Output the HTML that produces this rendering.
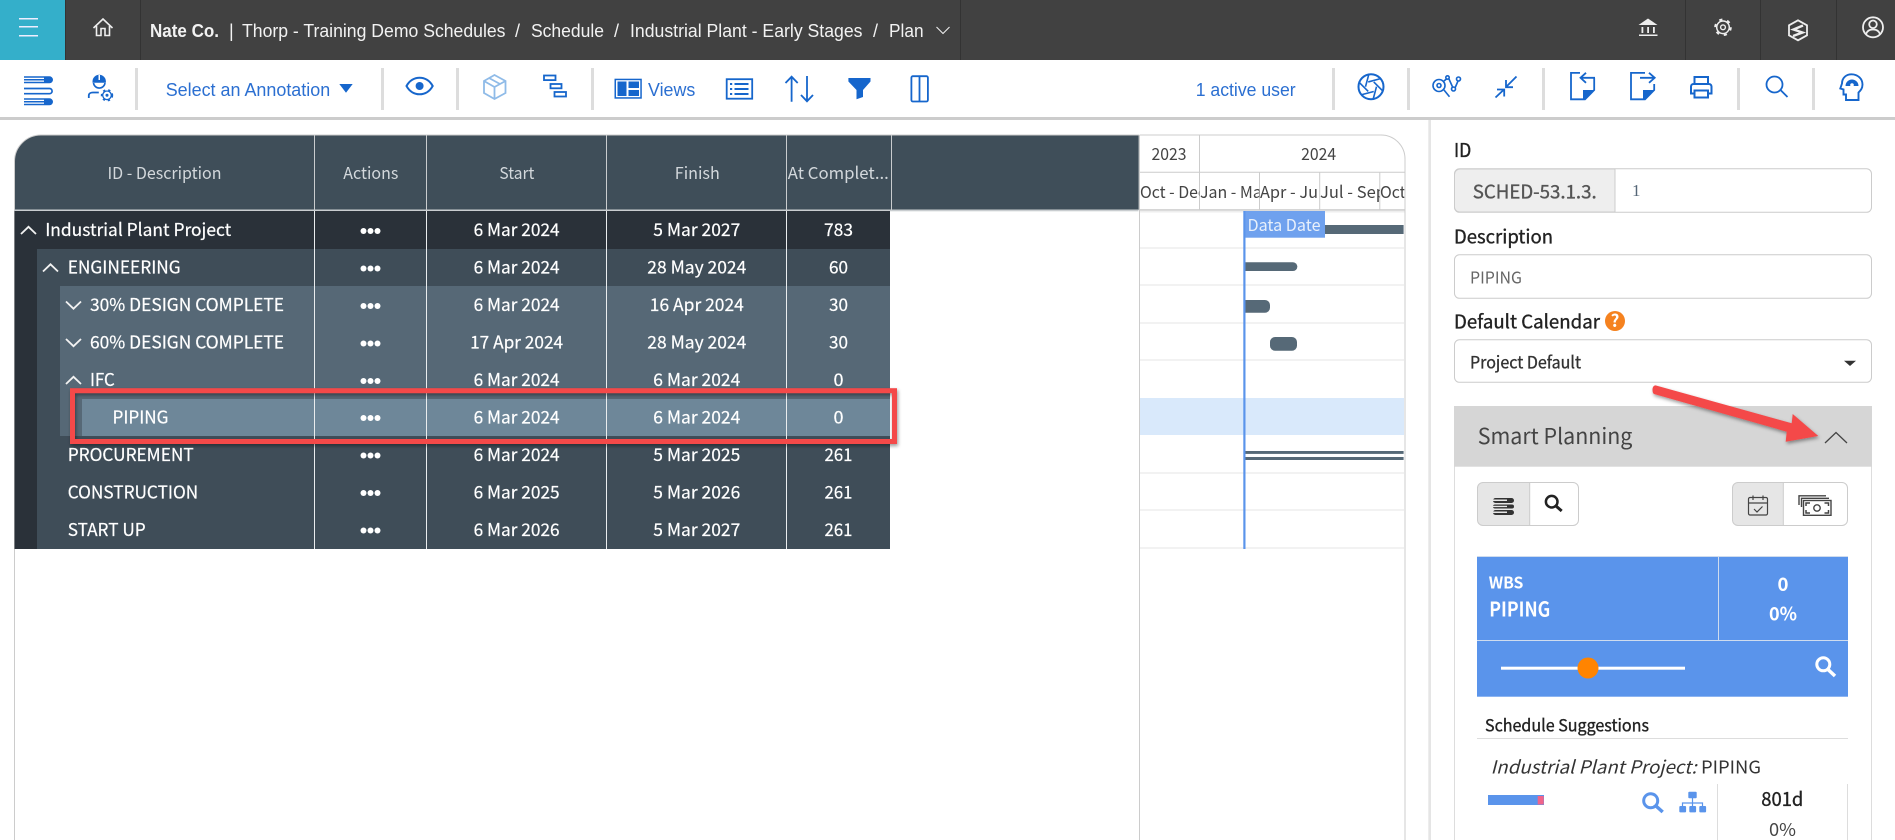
<!DOCTYPE html>
<html lang="en"><head><meta charset="utf-8"><title>Plan</title>
<style>
html,body{margin:0;padding:0;background:#fff;width:1895px;height:840px;overflow:hidden}
svg{display:block}
text{white-space:pre}
.n{font-family:"Noto Sans CJK JP","Liberation Sans",sans-serif}
.r{font-family:"Liberation Sans",sans-serif}
.tb text{font-size:17.5px;fill:#fff;stroke:#fff;stroke-width:.2px}
.tb .m{text-anchor:middle}
.b{fill:none;stroke:#1666cc;stroke-width:1.8}
.f{fill:#1666cc}
.w{fill:none;stroke:#eee;stroke-width:1.6}
.s{stroke:currentColor;stroke-width:.35px}
</style></head><body>
<svg width="1895" height="840" viewBox="0 0 1895 840" xmlns="http://www.w3.org/2000/svg">
<defs>
<filter id="sh" x="-10%" y="-30%" width="120%" height="170%"><feDropShadow dx="1" dy="2" stdDeviation="1.8" flood-color="#000" flood-opacity=".4"/></filter>
<clipPath id="c1"><rect x="1140" y="172" width="59.4" height="38"/></clipPath>
<clipPath id="c2"><rect x="1199.4" y="172" width="60" height="38"/></clipPath>
<clipPath id="c3"><rect x="1259.5" y="172" width="60" height="38"/></clipPath>
<clipPath id="c4"><rect x="1319.7" y="172" width="60" height="38"/></clipPath>
<clipPath id="c5"><rect x="1379.8" y="172" width="24.5" height="38"/></clipPath>
</defs>

<!-- top bar -->
<rect width="1895" height="60" fill="#414141"/>
<rect width="65" height="60" fill="#34afca"/>
<g fill="#eef"><rect x="19" y="18" width="19" height="1.5"/><rect x="19" y="26" width="19" height="1.5"/><rect x="19" y="35" width="19" height="1.5"/></g>
<g stroke="#333" stroke-width="1"><path d="M65.5 0V60M140.5 0V60M960.5 0V60M1685.5 0V60M1760.5 0V60M1836.5 0V60"/></g>
<path class="w" d="M93.5 28 103 19l9.5 9M96.5 26v9.5h4.5v-7h4v7h4.5V26"/>
<g class="r" font-size="18" fill="#f2f2f2">
<text x="150" y="37" font-weight="700" textLength="69" lengthAdjust="spacingAndGlyphs">Nate Co.</text>
<text x="229" y="37">|</text>
<text x="242" y="37" textLength="263.5" lengthAdjust="spacingAndGlyphs">Thorp - Training Demo Schedules</text>
<text x="515" y="37">/</text>
<text x="531" y="37" textLength="73" lengthAdjust="spacingAndGlyphs">Schedule</text>
<text x="614" y="37">/</text>
<text x="630" y="37" textLength="232.5" lengthAdjust="spacingAndGlyphs">Industrial Plant - Early Stages</text>
<text x="873" y="37">/</text>
<text x="889" y="37" textLength="34.6" lengthAdjust="spacingAndGlyphs">Plan</text>
</g>
<path class="w" style="stroke-width:1.1" d="M936.5 27 943 33.500 949.5 27"/>
<!-- bank -->
<path fill="#eee" d="M1648 18.5 1657.5 25H1638.5zM1639 34.5h18.5V36H1639zM1641.500 27h1.800v6h-1.800zM1647.200 27h1.800v6h-1.800zM1653 27h1.800v6H1653z"/>
<!-- gear -->
<g fill="none" stroke="#eee"><circle cx="1723" cy="27.3" r="6.3" stroke-width="1.5"/><circle cx="1723" cy="27.3" r="2.4" stroke-width="1.4"/><circle cx="1723" cy="27.3" r="7.8" stroke-width="2" stroke-dasharray="3.2 4.97"/></g>
<!-- hex -->
<path class="w" style="stroke-width:1.8" d="M1798 20.300 1807 25.300V35.300L1798 40.300 1789 35.300V25.300Z"/>
<path class="w" style="stroke-width:2.4" d="M1803 25.500 1793.500 29.500 1802.500 32.500 1793 36"/>
<!-- user -->
<circle class="w" style="stroke-width:1.8" cx="1873" cy="27.3" r="10"/><circle class="w" style="stroke-width:1.8" cx="1873" cy="24.3" r="3.8"/><path class="w" style="stroke-width:1.8" d="M1866 34.5c1-4 4-5 7-5s6 1 7 5"/>

<!-- toolbar -->
<rect y="117" width="1895" height="3" fill="#ccc"/>
<g fill="#ddd"><rect x="135" y="68" width="3" height="42"/><rect x="381" y="68" width="3" height="42"/><rect x="456" y="68" width="3" height="42"/><rect x="591" y="68" width="3" height="42"/><rect x="1332" y="68" width="3" height="42"/><rect x="1407" y="68" width="3" height="42"/><rect x="1542" y="68" width="3" height="42"/><rect x="1737" y="68" width="3" height="42"/><rect x="1812" y="68" width="3" height="42"/></g>
<!-- stack -->
<path class="f" d="M24 76.300h25.500a3.500 3.500 0 0 1 0 7H24v-1.500h20v-1.300H24v-1.500h20v-1.200H24z"/>
<path class="b" style="stroke-width:1.7" d="M24 88.500h25.500a2.600 2.600 0 0 1 0 5.200H24"/>
<path class="f" d="M24 98.300h25.500a3.500 3.500 0 0 1 0 7H24v-1.500h20v-1.300H24v-1.500h20v-1.200H24z"/>
<!-- worker -->
<path class="f" d="M92.500 81.500a6.700 6.700 0 0 1 13.400 0v1.300H92.500z"/><path class="b" style="stroke-width:1.6" d="M93.500 83a5.800 5.800 0 0 0 11.500 0"/><path fill="#fff" d="M98.500 75h1.500v5h-1.500z"/>
<path class="b" d="M88.800 98v-2.500c0-2 2-3 4-3h6"/>
<circle class="b" style="stroke-width:1.3" cx="107" cy="95.3" r="4.3"/><circle class="f" cx="107" cy="95.3" r="1.5"/><circle cx="107" cy="95.3" r="5.4" fill="none" stroke="#1666cc" stroke-width="1.6" stroke-dasharray="2.3 3"/>
<text class="r" x="165.7" y="96" font-size="18" fill="#2b6fd1" textLength="164.5" lengthAdjust="spacingAndGlyphs">Select an Annotation</text>
<path class="f" d="M339.300 84H352.700L346 92.800z"/>
<!-- eye -->
<path class="b" style="stroke-width:2" d="M406.500 86c3-5.500 8-8.300 13.100-8.300s10.100 2.800 13.100 8.300c-3 5.500-8 8.300-13.100 8.300s-10.100-2.800-13.100-8.300z"/><circle class="f" cx="419.6" cy="86" r="4"/>
<!-- box -->
<g fill="none" stroke="#8fbbe8" stroke-width="1.8"><path d="M494.500 75 505.500 81V93L494.500 99 484 93V81Z"/><path d="M484 81 494.500 87 505.500 81M494.500 87V99M489 78 500 84"/></g>
<!-- gantt -->
<g class="b"><rect x="544" y="75.5" width="11.500" height="4.600"/><rect x="550.5" y="84" width="11" height="4.300"/><rect x="554.5" y="92" width="11.500" height="4.500"/></g>
<!-- views -->
<rect class="f" x="614.5" y="78.7" width="27.300" height="20"/><rect fill="#fff" x="616" y="80.2" width="24.300" height="17"/><rect class="f" x="617.5" y="81.5" width="9" height="14.500"/><rect class="f" x="628.5" y="81.5" width="10.500" height="6.500"/><rect class="f" x="628.5" y="90" width="10.500" height="6"/>
<text class="r" x="648" y="96" font-size="18" fill="#2b6fd1" textLength="47.3" lengthAdjust="spacingAndGlyphs">Views</text>
<!-- list -->
<rect class="b" x="726.7" y="79.2" width="25.500" height="19.500"/><g class="f"><rect x="730" y="83" width="2.200" height="2"/><rect x="730" y="88" width="2.200" height="2"/><rect x="730" y="93" width="2.200" height="2"/><rect x="734.5" y="83" width="14" height="2"/><rect x="734.5" y="88" width="14" height="2"/><rect x="734.5" y="93" width="14" height="2"/></g>
<!-- sort -->
<path class="b" d="M791.600 77V101.700M785.500 83 791.600 76.700 797.700 83M807 76V101M801 95 807 101.300 813 95"/>
<!-- funnel -->
<path class="f" d="M848.400 78H870.500V81.500L863 90V97L856.500 99.300V90L848.400 81.500Z"/>
<!-- columns -->
<rect class="b" x="911.4" y="76.2" width="16.500" height="25.300" rx="1.5"/><path class="b" d="M919.500 76.500V101.500"/>
<text class="r" x="1195.7" y="96" font-size="18" fill="#2b6fd1" textLength="100" lengthAdjust="spacingAndGlyphs">1 active user</text>
<!-- aperture -->
<g transform="translate(1371 86.7)"><circle class="b" style="stroke-width:2" r="12.5"/><g class="b" style="stroke-width:1.6"><path d="M5.500 0 2.200 12.300"/><path d="M5.500 0 2.200 12.300" transform="rotate(60)"/><path d="M5.500 0 2.200 12.300" transform="rotate(120)"/><path d="M5.500 0 2.200 12.300" transform="rotate(180)"/><path d="M5.500 0 2.200 12.300" transform="rotate(240)"/><path d="M5.500 0 2.200 12.300" transform="rotate(300)"/></g></g>
<!-- network -->
<g class="b" style="stroke-width:1.6"><circle cx="1439" cy="85.5" r="6"/><circle cx="1439" cy="85.5" r="2"/><path d="M1444 90 1449.500 96.700M1444 81 1447 78.500M1449 79 1453 88M1455 88 1458 81"/><circle cx="1447.5" cy="77.5" r="1.7"/><circle cx="1453.5" cy="89" r="2"/><circle cx="1458.5" cy="79" r="2"/></g>
<!-- compress -->
<path class="b" d="M1516.500 76.500 1506 87M1506 80V87.200H1513M1495.500 97.500 1504 89.500M1497 89.500H1504.200V96.500"/>
<!-- docs -->
<path class="b" d="M1580 72.900H1571V99.300H1585L1594.200 90V78"/><path class="f" d="M1583 99.500V90H1595L1585 100Z"/><path class="b" d="M1595 77.800H1581M1586 72.800 1580.500 77.800 1586 82.800"/>
<path class="b" d="M1645 72.900H1631V99.300H1645L1654.200 90V84"/><path class="f" d="M1643 99.500V90H1655L1645 100Z"/><path class="b" d="M1640 77.800H1654.500M1649 72.800 1654.700 77.800 1649 82.800"/>
<!-- printer -->
<path class="b" style="stroke-width:2" d="M1694.500 84V77H1708V84M1694.500 93.500H1691V86.500a2.500 2.500 0 0 1 2.500-2.500H1709a2.500 2.500 0 0 1 2.500 2.500V93.500H1708"/><rect class="b" style="stroke-width:2" x="1694.5" y="90.5" width="13.500" height="7"/>
<!-- search -->
<circle class="b" cx="1774.5" cy="84.5" r="8"/><path class="b" d="M1780.500 90 1787.500 97"/>
<!-- head -->
<path class="b" style="stroke-width:1.9" d="M1846 100V94.500H1843.500V89.500L1840.300 88.500 1842 83.500C1842 77.500 1846.500 74.300 1851.500 74.300C1858 74.300 1862.500 79 1862.500 84.500C1862.500 88.500 1860.500 90.500 1858.500 92.500V100Z"/><path class="f" d="M1845.500 86a6.500 6.500 0 0 1 13 0z"/><circle cx="1852" cy="85" r="1.800" fill="#fff"/>

<!-- gantt grid -->
<g fill="none" stroke="#e6e6e6" stroke-width="1"><path d="M1140 248H1404M1140 285H1404M1140 323H1404M1140 360H1404M1140 473H1404M1140 510H1404M1140 548H1404"/></g>
<rect x="1140" y="398" width="264" height="37" fill="#d9e9fb"/>
<path d="M1140 210H1405" stroke="#c8c8c8" stroke-width="1.5"/>
<path d="M1140 211.500H1405" stroke="#eee" stroke-width="2"/>
<path d="M1140 172.300H1405M1199.500 135V210M1259.500 172V210M1319.700 172V210M1379.800 172V210" stroke="#ccc" stroke-width="1" fill="none"/>
<path d="M1139.500 135H1381A24 24 0 0 1 1405 159V840M1139.500 135V840" fill="none" stroke="#ccc" stroke-width="1"/>
<g class="n" font-size="16.5" fill="#444">
<text x="1169" y="160" text-anchor="middle" textLength="35" lengthAdjust="spacingAndGlyphs">2023</text>
<text x="1318.6" y="160" text-anchor="middle" textLength="35" lengthAdjust="spacingAndGlyphs">2024</text>
<g clip-path="url(#c1)"><text x="1140" y="198" textLength="66" lengthAdjust="spacingAndGlyphs">Oct - Dec</text></g>
<g clip-path="url(#c2)"><text x="1200" y="198" textLength="68" lengthAdjust="spacingAndGlyphs">Jan - Mar</text></g>
<g clip-path="url(#c3)"><text x="1260" y="198" textLength="68" lengthAdjust="spacingAndGlyphs">Apr - Jun</text></g>
<g clip-path="url(#c4)"><text x="1320" y="198" textLength="66" lengthAdjust="spacingAndGlyphs">Jul - Sep</text></g>
<g clip-path="url(#c5)"><text x="1380" y="198" textLength="66" lengthAdjust="spacingAndGlyphs">Oct - Dec</text></g>
</g>
<g fill="#566977">
<rect x="1245" y="225" width="158.600" height="9"/>
<path d="M1245 262.300H1293a4.300 4.300 0 0 1 0 8.700H1245z"/>
<path d="M1245 300H1265a5 5 0 0 1 5 5V307.700a5 5 0 0 1-5 5H1245z"/>
<rect x="1270" y="337" width="27" height="13.700" rx="5"/>
<rect x="1245" y="451" width="158.600" height="2.900"/><rect x="1245" y="457" width="158.600" height="3"/>
</g>
<rect x="1243.3" y="211" width="2.200" height="338" fill="#5a94eb"/>
<rect x="1245.4" y="211" width="79.600" height="26.700" fill="#6fa1ee"/>
<text class="n" x="1247.5" y="231" font-size="16.5" fill="#e8f0fb" textLength="73" lengthAdjust="spacingAndGlyphs">Data Date</text>

<!-- table -->
<path d="M41 135H1138.700V210H14.500V161.500A26.500 26.500 0 0 1 41 135Z" fill="#3f4e59"/>
<path d="M14.500 161.500A26.500 26.500 0 0 1 41 135H1139" fill="none" stroke="#ccc" stroke-width="1"/>
<path d="M14.500 160V840" stroke="#ccc" stroke-width="1"/>
<rect x="14.5" y="209.5" width="1124" height="1.800" fill="#c9cdd0"/>
<rect x="14.5" y="211" width="875.500" height="338" fill="#2a3139"/>
<rect x="37" y="249" width="853" height="300" fill="#3f4d58"/>
<rect x="60" y="286" width="830" height="150" fill="#566876"/>
<rect x="82" y="399" width="808" height="37" fill="#6e8799"/>
<g stroke="#c9ccce" stroke-width="1"><path d="M314.500 135V210M426.500 135V210M606.500 135V210M786.500 135V210M891.500 135V210"/></g>
<g stroke="#e9ecee" stroke-width="1"><path d="M314.500 211V549M426.500 211V549M606.500 211V549M786.500 211V549"/></g>
<g class="n" font-size="16.5" fill="#d3d8dc">
<text x="107.5" y="179" textLength="114" lengthAdjust="spacingAndGlyphs">ID - Description</text>
<text x="343.3" y="179" textLength="55" lengthAdjust="spacingAndGlyphs">Actions</text>
<text x="499.4" y="179" textLength="35" lengthAdjust="spacingAndGlyphs">Start</text>
<text x="674.8" y="179" textLength="45" lengthAdjust="spacingAndGlyphs">Finish</text>
<text x="787.8" y="179" textLength="101" lengthAdjust="spacingAndGlyphs">At Complet...</text>
</g>
<g class="tb n">
<text x="45.2" y="236" textLength="186" lengthAdjust="spacingAndGlyphs">Industrial Plant Project</text>
<text x="67.7" y="273.5" textLength="113" lengthAdjust="spacingAndGlyphs">ENGINEERING</text>
<text x="90" y="311" textLength="194" lengthAdjust="spacingAndGlyphs">30% DESIGN COMPLETE</text>
<text x="90" y="348.5" textLength="194" lengthAdjust="spacingAndGlyphs">60% DESIGN COMPLETE</text>
<text x="90" y="386" textLength="24.8" lengthAdjust="spacingAndGlyphs">IFC</text>
<text x="112.5" y="423.5" textLength="56" lengthAdjust="spacingAndGlyphs">PIPING</text>
<text x="67.7" y="461" textLength="126" lengthAdjust="spacingAndGlyphs">PROCUREMENT</text>
<text x="67.7" y="498.5" textLength="130.5" lengthAdjust="spacingAndGlyphs">CONSTRUCTION</text>
<text x="67.7" y="536" textLength="78" lengthAdjust="spacingAndGlyphs">START UP</text>

<text class="m" x="516.6" y="236" textLength="86" lengthAdjust="spacingAndGlyphs">6 Mar 2024</text>
<text class="m" x="516.6" y="273.5" textLength="86" lengthAdjust="spacingAndGlyphs">6 Mar 2024</text>
<text class="m" x="516.6" y="311" textLength="86" lengthAdjust="spacingAndGlyphs">6 Mar 2024</text>
<text class="m" x="516.6" y="348.5" textLength="93" lengthAdjust="spacingAndGlyphs">17 Apr 2024</text>
<text class="m" x="516.6" y="386" textLength="86" lengthAdjust="spacingAndGlyphs">6 Mar 2024</text>
<text class="m" x="516.6" y="423.5" textLength="86" lengthAdjust="spacingAndGlyphs">6 Mar 2024</text>
<text class="m" x="516.6" y="461" textLength="86" lengthAdjust="spacingAndGlyphs">6 Mar 2024</text>
<text class="m" x="516.6" y="498.5" textLength="86" lengthAdjust="spacingAndGlyphs">6 Mar 2025</text>
<text class="m" x="516.6" y="536" textLength="86" lengthAdjust="spacingAndGlyphs">6 Mar 2026</text>

<text class="m" x="696.8" y="236" textLength="87" lengthAdjust="spacingAndGlyphs">5 Mar 2027</text>
<text class="m" x="696.8" y="273.5" textLength="99" lengthAdjust="spacingAndGlyphs">28 May 2024</text>
<text class="m" x="696.8" y="311" textLength="94" lengthAdjust="spacingAndGlyphs">16 Apr 2024</text>
<text class="m" x="696.8" y="348.5" textLength="99" lengthAdjust="spacingAndGlyphs">28 May 2024</text>
<text class="m" x="696.8" y="386" textLength="87" lengthAdjust="spacingAndGlyphs">6 Mar 2024</text>
<text class="m" x="696.8" y="423.5" textLength="87" lengthAdjust="spacingAndGlyphs">6 Mar 2024</text>
<text class="m" x="696.8" y="461" textLength="87" lengthAdjust="spacingAndGlyphs">5 Mar 2025</text>
<text class="m" x="696.8" y="498.5" textLength="87" lengthAdjust="spacingAndGlyphs">5 Mar 2026</text>
<text class="m" x="696.8" y="536" textLength="87" lengthAdjust="spacingAndGlyphs">5 Mar 2027</text>

<text class="m" x="838.5" y="236" textLength="29" lengthAdjust="spacingAndGlyphs">783</text>
<text class="m" x="838.5" y="273.5" textLength="19" lengthAdjust="spacingAndGlyphs">60</text>
<text class="m" x="838.5" y="311" textLength="19" lengthAdjust="spacingAndGlyphs">30</text>
<text class="m" x="838.5" y="348.5" textLength="19" lengthAdjust="spacingAndGlyphs">30</text>
<text class="m" x="838.5" y="386" textLength="10" lengthAdjust="spacingAndGlyphs">0</text>
<text class="m" x="838.5" y="423.5" textLength="10" lengthAdjust="spacingAndGlyphs">0</text>
<text class="m" x="838.5" y="461" textLength="28" lengthAdjust="spacingAndGlyphs">261</text>
<text class="m" x="838.5" y="498.5" textLength="28" lengthAdjust="spacingAndGlyphs">261</text>
<text class="m" x="838.5" y="536" textLength="28" lengthAdjust="spacingAndGlyphs">261</text>
</g>
<g fill="#fff">
<circle cx="363.5" cy="231" r="3"/><circle cx="370.5" cy="231" r="3"/><circle cx="377.5" cy="231" r="3"/>
<circle cx="363.5" cy="268.5" r="3"/><circle cx="370.5" cy="268.5" r="3"/><circle cx="377.5" cy="268.5" r="3"/>
<circle cx="363.5" cy="306" r="3"/><circle cx="370.5" cy="306" r="3"/><circle cx="377.5" cy="306" r="3"/>
<circle cx="363.5" cy="343.5" r="3"/><circle cx="370.5" cy="343.5" r="3"/><circle cx="377.5" cy="343.5" r="3"/>
<circle cx="363.5" cy="381" r="3"/><circle cx="370.5" cy="381" r="3"/><circle cx="377.5" cy="381" r="3"/>
<circle cx="363.5" cy="418" r="3"/><circle cx="370.5" cy="418" r="3"/><circle cx="377.5" cy="418" r="3"/>
<circle cx="363.5" cy="455.5" r="3"/><circle cx="370.5" cy="455.5" r="3"/><circle cx="377.5" cy="455.5" r="3"/>
<circle cx="363.5" cy="493" r="3"/><circle cx="370.5" cy="493" r="3"/><circle cx="377.5" cy="493" r="3"/>
<circle cx="363.5" cy="530.5" r="3"/><circle cx="370.5" cy="530.5" r="3"/><circle cx="377.5" cy="530.5" r="3"/>
</g>
<g fill="none" stroke="#f2f2f2" stroke-width="1.8">
<path d="M21 234 28.500 226.800 36 234"/>
<path d="M43 271.500 50.500 264.300 58 271.500"/>
<path d="M66 301.500 73.500 308.700 81 301.500"/>
<path d="M66 339 73.500 346.200 81 339"/>
<path d="M66 384 73.500 376.800 81 384"/>
</g>
<rect x="72.5" y="390.7" width="822" height="50.800" fill="none" stroke="#f44848" stroke-width="5" filter="url(#sh)"/>

<!-- right panel -->
<rect x="1428.3" y="120" width="2.700" height="720" fill="#e5e5e5"/>
<g class="n" font-size="19" fill="#222" style="color:#222">
<text class="s" x="1454" y="157" textLength="17.3" lengthAdjust="spacingAndGlyphs">ID</text>
<text class="s" x="1454" y="243.3" textLength="99" lengthAdjust="spacingAndGlyphs">Description</text>
<text class="s" x="1454" y="328.3" textLength="146" lengthAdjust="spacingAndGlyphs">Default Calendar</text>
</g>
<rect x="1454.5" y="168.8" width="417" height="43.500" rx="5" fill="#fff" stroke="#ccc"/>
<path d="M1615 169H1460a5.500 5.500 0 0 0-5.500 5.500V207a5 5 0 0 0 5 5H1615z" fill="#eee" stroke="#ccc"/>
<text class="n s" x="1472.7" y="198.7" font-size="19" fill="#555" style="color:#555" textLength="124" lengthAdjust="spacingAndGlyphs">SCHED-53.1.3.</text>
<text x="1632" y="196" font-family="Liberation Serif,serif" font-size="17" fill="#567">1</text>
<rect x="1454.5" y="254.8" width="417" height="43.500" rx="5" fill="#fff" stroke="#ccc"/>
<text class="n" x="1470" y="283.3" font-size="16.5" fill="#666" textLength="52" lengthAdjust="spacingAndGlyphs">PIPING</text>
<circle cx="1615" cy="321" r="10" fill="#f5821f"/>
<text class="n" x="1615" y="327" font-size="17" font-weight="700" fill="#fff" text-anchor="middle">?</text>
<rect x="1454.5" y="339.8" width="417" height="42.500" rx="5" fill="#fff" stroke="#ccc"/>
<text class="n s" x="1470" y="368.3" font-size="17" fill="#333" style="color:#333" textLength="111" lengthAdjust="spacingAndGlyphs">Project Default</text>
<path d="M1844 360.700H1856L1850 366z" fill="#333"/>
<path d="M1454.500 466V840M1871.500 466V840" stroke="#ddd" stroke-width="1"/>
<rect x="1454" y="406" width="418" height="60.700" fill="#d6d6d6"/>
<text class="n" x="1477.7" y="444" font-size="22" fill="#444" textLength="154.7" lengthAdjust="spacingAndGlyphs">Smart Planning</text>
<path d="M1825 443 1836 432.500 1847 443" fill="none" stroke="#444" stroke-width="1.3"/>
<path d="M1656 385.500C1654 385 1652.500 387 1652.500 389.800 1652.500 392 1653 393.500 1654 394L1786.700 431.700 1785.700 441.700 1818.300 436 1792.700 414 1791.700 423.300Z" fill="#f44848" filter="url(#sh)"/>

<!-- button groups -->
<path d="M1530 482.500H1483a5.500 5.500 0 0 0-5.500 5.500V520a5.500 5.500 0 0 0 5.500 5.500H1530z" fill="#e6e6e6"/>
<rect x="1477.5" y="482.5" width="101" height="43" rx="5.5" fill="none" stroke="#ccc"/><path d="M1529.700 482.500V525.500" stroke="#ccc"/>
<g fill="#333"><rect x="1493" y="498" width="21" height="5" rx="2.5"/><rect x="1493" y="504.5" width="21" height="4" rx="2"/><rect x="1493" y="510" width="21" height="5" rx="2.5"/><rect x="1493" y="499.5" width="14" height="1.500" fill="#e6e6e6"/><rect x="1493" y="505.800" width="14" height="1.300" fill="#e6e6e6"/><rect x="1493" y="511.5" width="14" height="1.500" fill="#e6e6e6"/></g>
<circle cx="1551.7" cy="501.7" r="5.8" fill="none" stroke="#222" stroke-width="2.5"/><path d="M1556 506 1561.700 511" stroke="#222" stroke-width="3"/>
<path d="M1783.300 482.500H1738a5.500 5.500 0 0 0-5.500 5.500V520a5.500 5.500 0 0 0 5.500 5.500H1783.300z" fill="#e6e6e6"/>
<rect x="1732.5" y="482.5" width="115" height="43" rx="5.5" fill="none" stroke="#ccc"/><path d="M1783.300 482.500V525.500" stroke="#ccc"/>
<g fill="none" stroke="#444" stroke-width="1.2"><rect x="1748.5" y="497.5" width="19" height="17.500" rx="1.5"/><path d="M1748.500 503H1767.500M1753 495.500V500M1763 495.500V500M1754 509 1757 512 1762.500 506.500"/></g>
<g fill="none" stroke="#444" stroke-width="1.4"><path d="M1799 505V495.800H1826M1801.500 507V498.300H1829"/><rect x="1803.5" y="500.5" width="27.500" height="14.800" fill="#fff"/><circle cx="1817" cy="508" r="3.2"/><path d="M1806 506V503H1810M1828.500 510V513H1824.500M1806 510V513H1810M1828.500 506V503H1824.500" stroke-width="1.5"/></g>

<!-- blue card -->
<rect x="1477" y="556.3" width="371" height="140.400" fill="#5a94eb"/>
<path d="M1477 556.500H1848M1477 640.500H1848M1718.500 556.500V640" stroke="#cfdcee" stroke-width="1"/>
<g class="n" fill="#fff">
<text x="1488.7" y="588.3" font-size="16" font-weight="700" textLength="34.7" lengthAdjust="spacingAndGlyphs">WBS</text>
<text x="1489.3" y="616.7" font-size="20" font-weight="700" textLength="61" lengthAdjust="spacingAndGlyphs">PIPING</text>
<text x="1783" y="591" font-size="19" font-weight="700" text-anchor="middle" textLength="11" lengthAdjust="spacingAndGlyphs">0</text>
<text x="1783" y="620.3" font-size="19" font-weight="700" text-anchor="middle" textLength="28" lengthAdjust="spacingAndGlyphs">0%</text>
</g>
<rect x="1501" y="666.7" width="184" height="3" fill="#fff"/>
<circle cx="1588" cy="668" r="10.5" fill="#ff8400"/>
<circle cx="1823.3" cy="664.3" r="6.5" fill="none" stroke="#fff" stroke-width="3"/><path d="M1828 669.500 1835 676" stroke="#fff" stroke-width="3.5"/>

<text class="n s" x="1485" y="731.7" font-size="17" fill="#222" style="color:#222" textLength="164" lengthAdjust="spacingAndGlyphs">Schedule Suggestions</text>
<path d="M1477 738.500H1848" stroke="#ddd"/>
<text class="n" x="1490.7" y="773.3" font-size="18" font-style="italic" fill="#333" textLength="206" lengthAdjust="spacingAndGlyphs">Industrial Plant Project:</text>
<text class="n" x="1701" y="773.3" font-size="18" fill="#333" textLength="60" lengthAdjust="spacingAndGlyphs">PIPING</text>
<rect x="1488" y="795" width="56" height="10" fill="#5a94eb"/><rect x="1537.7" y="796" width="6" height="8.500" fill="#f0648a"/>
<circle cx="1650.7" cy="800.7" r="7" fill="none" stroke="#5a94eb" stroke-width="3"/><path d="M1656 806 1662.700 812" stroke="#5a94eb" stroke-width="3.5"/>
<g fill="#5a94eb"><rect x="1688.3" y="791.7" width="8.400" height="6.600" rx="1"/><rect x="1679.3" y="806" width="6.800" height="6.400" rx="1"/><rect x="1689.3" y="806" width="6.800" height="6.400" rx="1"/><rect x="1699.3" y="806" width="6.800" height="6.400" rx="1"/></g>
<path d="M1692.500 798V806M1682.500 806V803H1702.500V806" fill="none" stroke="#5a94eb" stroke-width="1.2"/>
<path d="M1717.500 784V840M1847.500 784V840" stroke="#ddd"/>
<text class="n s" x="1761.3" y="806" font-size="19.5" fill="#222" style="color:#222" textLength="42" lengthAdjust="spacingAndGlyphs">801d</text>
<text class="n" x="1782.5" y="836" font-size="18" fill="#444" text-anchor="middle" textLength="27" lengthAdjust="spacingAndGlyphs">0%</text>
</svg>
</body></html>
